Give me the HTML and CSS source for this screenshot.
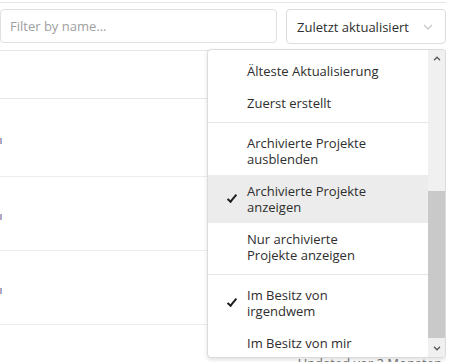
FILE: index.html
```html
<!DOCTYPE html>
<html lang="de">
<head>
  <meta charset="UTF-8" />
  <title>Projekte</title>
  <link rel="stylesheet" href="styles.css">
</head>
<body>

<div class="page">
  <!-- Filterleiste -->
  <div class="filter-bar">
    <input class="filter-input" type="text" placeholder="Filter by name...">
    <button class="sort-btn">
      <span>Zuletzt aktualisiert</span>
      <svg class="caret" width="10" height="6" viewBox="0 0 10 6"><path d="M1 1l4 4 4-4" fill="none" stroke="#c4c4c4" stroke-width="1.2"/></svg>
    </button>
  </div>

  <!-- Projektliste (hinter dem Menü) -->
  <ul class="project-list">
    <li class="row row-head"></li>
    <li class="row row-first"><span class="dot"></span></li>
    <li class="row"><span class="dot"></span></li>
    <li class="row"><span class="dot"></span></li>
    <li class="row row-last"><span class="dot"></span><span class="updated">Updated vor 2 Monaten</span></li>
  </ul>

  <!-- Sortier-Menü -->
  <div class="dropdown">
    <ul class="dropdown-list">
      <li class="item">Älteste Aktualisierung</li>
      <li class="item">Zuerst erstellt</li>
      <li class="divider"></li>
      <li class="item">Archivierte Projekte ausblenden</li>
      <li class="item active is-checked">Archivierte Projekte anzeigen</li>
      <li class="item">Nur archivierte Projekte anzeigen</li>
      <li class="divider"></li>
      <li class="item is-checked">Im Besitz von irgendwem</li>
      <li class="item">Im Besitz von mir</li>
    </ul>
    <div class="scrollbar">
      <svg class="arrow" width="8" height="5" viewBox="0 0 8 5"><path d="M1 4.2l3-3 3 3" fill="none" stroke="#555" stroke-width="1.3"/></svg>
      <div class="track"><div class="thumb"></div></div>
      <svg class="arrow" width="8" height="5" viewBox="0 0 8 5"><path d="M1 0.8l3 3 3-3" fill="none" stroke="#555" stroke-width="1.3"/></svg>
    </div>
  </div>
</div>

</body>
</html>
```

FILE: styles.css
```css
body {
  margin: 0;
  padding: 0;
  background: #fff;
  font-family: "Open Sans", "Noto Sans", sans-serif;
  font-size: 13px;
  color: #2e2e2e;
  overflow: hidden;
}

.page {
  position: relative;
  width: 446px;
  height: 362px;
  overflow: hidden;
  padding-top: 2px;
  box-sizing: border-box;
}

.filter-bar {
  display: flex;
  gap: 9px;
  border-top: 1px solid #e5e5e5;
  padding: 6px 0 6px;
}

.filter-input {
  flex: 1;
  min-width: 0;
  height: 34px;
  box-sizing: border-box;
  border: 1px solid #e0e0e0;
  border-radius: 4px;
  padding: 0 9px;
  font: inherit;
  font-size: 13px;
  color: #2e2e2e;
  outline: none;
}

.filter-input::placeholder {
  color: #a0a0a0;
}

.sort-btn {
  width: 160px;
  height: 35px;
  box-sizing: border-box;
  display: flex;
  align-items: center;
  justify-content: space-between;
  padding: 0 12px 0 10px;
  border: 1px solid #dcdcdc;
  border-radius: 4px;
  background: #fff;
  font: inherit;
  font-size: 13px;
  color: #2e2e2e;
}

.project-list {
  list-style: none;
  margin: 0;
  padding: 0;
  border-top: 1px solid #e5e5e5;
}

.row {
  height: 73px;
  border-bottom: 1px solid #ececec;
  display: flex;
  align-items: center;
  position: relative;
}

.row-head {
  height: 47px;
  border-bottom-color: #e5e5e5;
}

.row-first {
  height: 77px;
}

.row-last {
  border-bottom: none;
}

.dot {
  width: 1px;
  height: 6px;
  margin-top: 6px;
  background: #c9a0a8;
  border-right: 1px solid #8fb2ea;
}

.updated {
  position: absolute;
  right: 4px;
  top: 29px;
  color: #707070;
  font-size: 13px;
}

/* Menü */
.dropdown {
  position: absolute;
  top: 49px;
  left: 207px;
  width: 239px;
  height: 309px;
  box-sizing: border-box;
  display: flex;
  background: #fff;
  border: 1px solid #dbdbdb;
  border-radius: 4px;
  box-shadow: 0 2px 4px rgba(0, 0, 0, 0.12);
  overflow: hidden;
}

.dropdown-list {
  flex: 1;
  list-style: none;
  margin: 0;
  padding: 5px 0 0;
}

.item {
  position: relative;
  padding: 8px 44px 8px 39px;
  line-height: 16px;
  color: #2e2e2e;
}

.item.active {
  background: #ececec;
}

.item.is-checked::before {
  content: "";
  position: absolute;
  left: 19px;
  top: 50%;
  width: 8px;
  height: 3px;
  margin-top: -4px;
  border-left: 2px solid #1e1e1e;
  border-bottom: 2px solid #1e1e1e;
  transform: rotate(-50deg);
}

.divider {
  height: 1px;
  margin: 3px 0 4px;
  background: #e5e5e5;
}

.scrollbar {
  width: 17px;
  display: flex;
  flex-direction: column;
  align-items: center;
  background: #f0f0f0;
}

.scrollbar .arrow {
  flex: none;
  margin: 6px 0;
}

.track {
  flex: 1;
  width: 100%;
  display: flex;
  flex-direction: column;
  justify-content: flex-end;
  padding-bottom: 2px;
}

.thumb {
  height: 147px;
  background: #c9c9c9;
}
```
